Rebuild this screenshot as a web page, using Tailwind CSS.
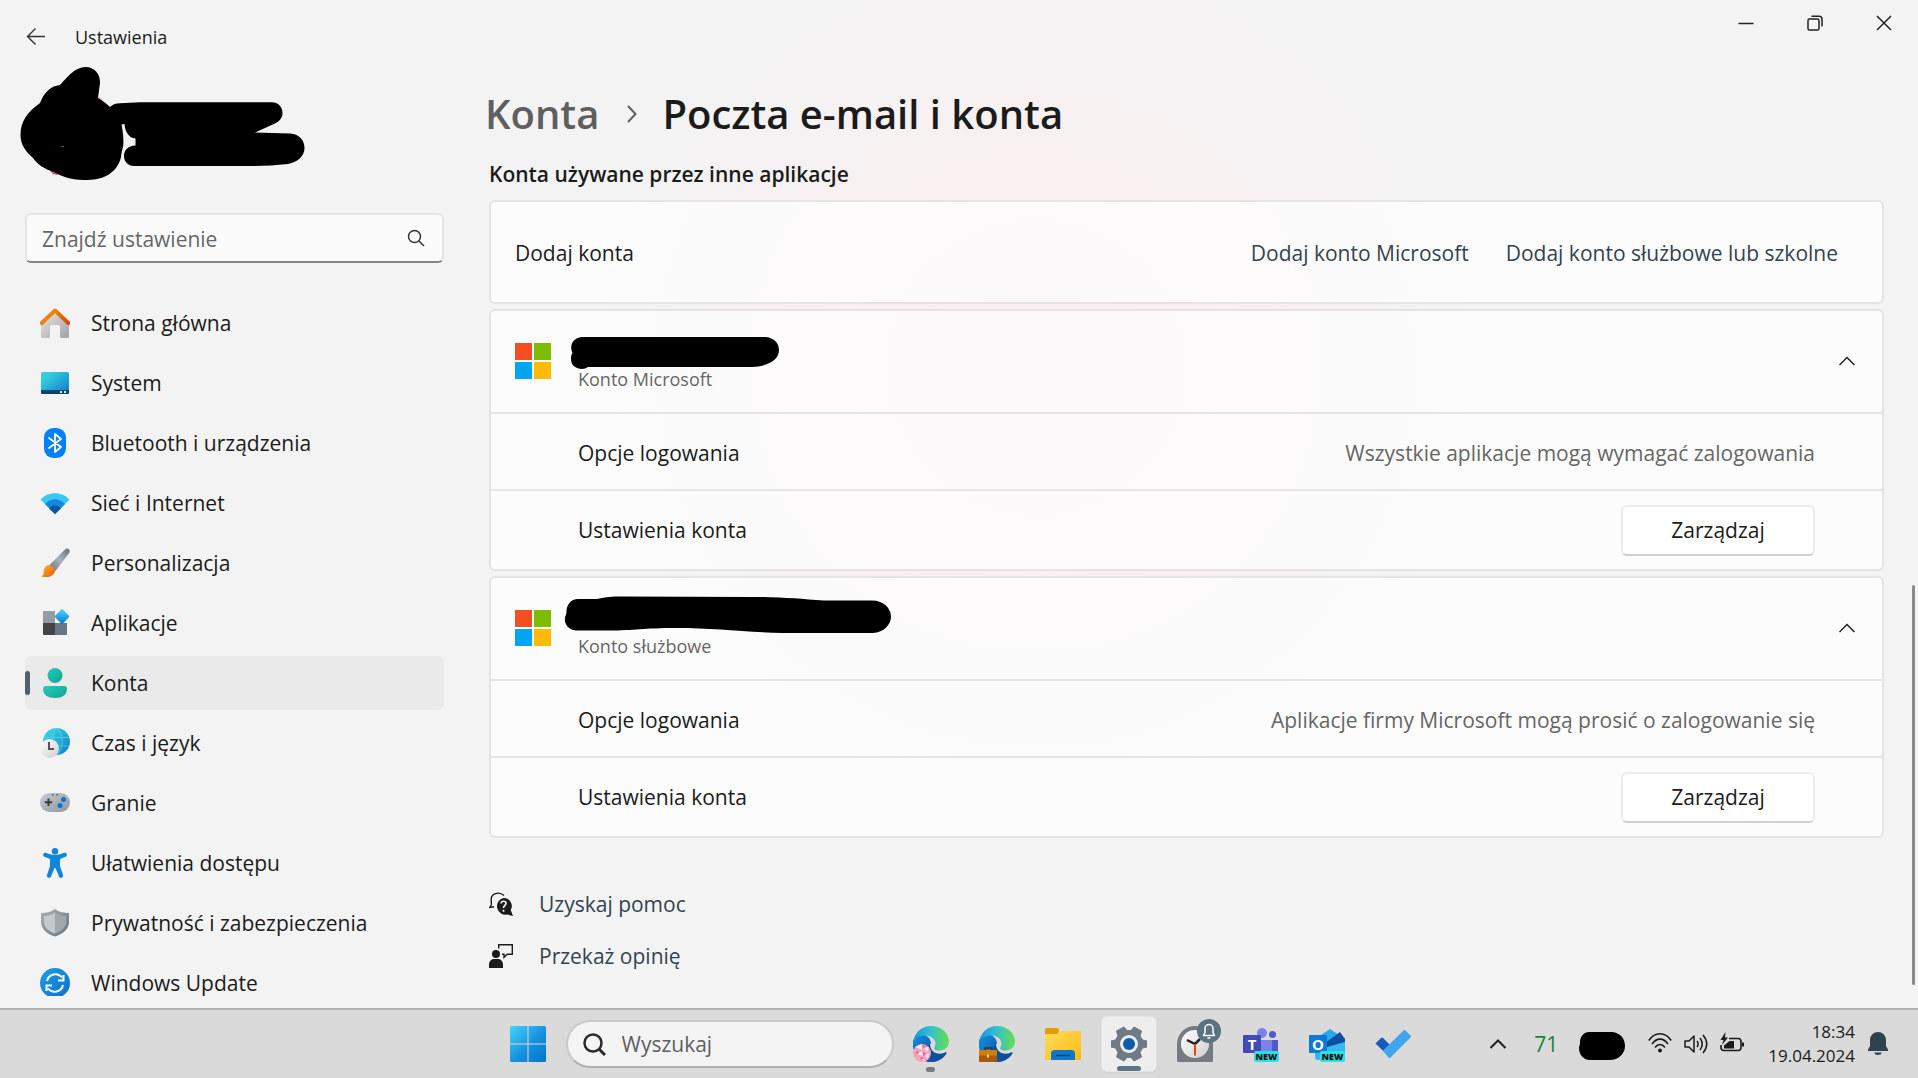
<!DOCTYPE html>
<html lang="pl">
<head>
  <meta charset="UTF-8">
  <meta name="viewport" content="width=device-width, initial-scale=1.0">
  <title>Ustawienia</title>
  <script src="https://cdn.jsdelivr.net/npm/@tailwindcss/browser@4"></script>
</head>
<body class="h-screen flex flex-col overflow-hidden bg-[#f3f3f3] bg-[radial-gradient(circle_at_54%_34%,#faedf0_0,#f8f0f1_200px,#f3f3f3_440px)] font-['Open_Sans','Noto_Sans',sans-serif] text-[21px] leading-[30px] text-[#1b1b1b]">

  <!-- Title bar -->
  <header class="flex h-[66px] shrink-0 items-start justify-between">
    <div class="flex h-full items-center gap-[29px] pt-2 pl-[26px]">
      <button type="button" aria-label="Wstecz">
        <svg class="h-5 w-5" viewBox="0 0 20 20" fill="none" stroke="#333" stroke-width="1.4"><path d="M19 9.500H1.500M9.500 1.500l-8 8 8 8"/></svg>
      </button>
      <span class="text-[18px] leading-6">Ustawienia</span>
    </div>
    <div class="flex h-[46px]">
      <button type="button" class="flex w-[69px] items-center justify-center" aria-label="Minimalizuj">
        <svg class="h-4 w-4" viewBox="0 0 16 16" fill="none" stroke="#222" stroke-width="1.500"><path d="M.5 8.500h15"/></svg>
      </button>
      <button type="button" class="flex w-[69px] items-center justify-center" aria-label="Przywróć">
        <svg class="h-4 w-4" viewBox="0 0 16 16" fill="none" stroke="#222" stroke-width="1.500"><rect x="1" y="4" width="11" height="11" rx="1.500"/><path d="M4.500 1.200H12a3 3 0 0 1 3 3V11.500"/></svg>
      </button>
      <button type="button" class="flex w-[69px] items-center justify-center" aria-label="Zamknij">
        <svg class="h-4 w-4" viewBox="0 0 16 16" fill="none" stroke="#222" stroke-width="1.500"><path d="M1 1l14 14M15 1L1 15"/></svg>
      </button>
    </div>
  </header>

  <div class="flex min-h-0 flex-1">
    <!-- Sidebar -->
    <aside class="flex w-[444px] shrink-0 flex-col pb-3 pl-[25px]">
      <svg class="-ml-[5px] h-[116px] w-[290px] shrink-0" viewBox="20 66 290 116">
        <path d="M97 97l3 .5 6 7-8-2z" fill="#f3a6bd"/>
        <path d="M50 171h6l2 4-5-1z" fill="#e0446f"/>
        <path d="M86 67C94 67 100.500 74 100 83L98 98C103 101 107 104 110 107C113 104 116 103.500 120 103.300L140 102.300H272C278 102.300 282.500 107 282.500 113C282.500 117.500 280 121 275 123.500L255 132.500L290 133.500C299 134 304.500 140 304.500 148C304.500 156 298 162 288 164C275 165.500 262 166 250 166H134C128 166 124 161.500 124 156C124 150 128 146 135.500 145.500V138.500C129 138 125 132 124.500 124L121.500 124.500C123 132 124 140 123 147C122 150 121.500 153 121 157C119 166 114 171 108 175C101 179 94 180 84 180C70 180 61 176 54 172C44 169 37 164 33 158C25 151 20.500 144 20.500 135C20.500 122 27 112 40 103C44 93 50 86 60 85C66 79 74 67 86 67z"/>
        <path d="M61 146h3v1h-3z" fill="#8a4a30"/>
      </svg>
      <div class="mt-[31px] flex h-[50px] shrink-0 items-center rounded-md border-2 border-[#e5e5e5] border-b-[#868686] bg-[#fbfbfb] pr-[17px] pl-[15px]">
        <label for="findSetting" class="sr-only">Znajdź ustawienie</label>
        <input id="findSetting" type="text" placeholder="Znajdź ustawienie" class="h-full min-w-0 flex-1 bg-transparent pt-0.5 outline-none placeholder:text-[#666]">
        <svg class="h-[18px] w-[18px]" viewBox="0 0 18 18" fill="none" stroke="#333" stroke-width="1.500"><circle cx="7.500" cy="7.500" r="6"/><path d="M12 12l5 5"/></svg>
      </div>

      <nav class="mt-[33px] flex min-h-0 flex-1 flex-col gap-1.5 overflow-hidden">
        <a href="#home" class="flex h-[54px] shrink-0 items-center gap-[21px] rounded-md pl-[15px]">
          <svg class="h-[30px] w-[30px]" viewBox="0 0 30 30">
            <defs>
              <linearGradient id="wall" x1="0" y1="0" x2="1" y2="1"><stop stop-color="#e8e8e8"/><stop offset="1" stop-color="#a3a3a3"/></linearGradient>
              <linearGradient id="roof"><stop stop-color="#f07f1a"/><stop offset=".5" stop-color="#e8860a"/><stop offset="1" stop-color="#d64a0b"/></linearGradient>
            </defs>
            <path fill="url(#wall)" d="M1 14L15 2l14 12v14.500a1.500 1.500 0 0 1-1.500 1.500H21.500a1.500 1.500 0 0 1-1.500-1.500V18.500a1.500 1.500 0 0 0-1.500-1.500h-7a1.500 1.500 0 0 0-1.500 1.500V28.500A1.500 1.500 0 0 1 8.500 30h-6A1.500 1.500 0 0 1 1 28.500z"/>
            <path d="M1.800 15L15 2.500 28.200 15" fill="none" stroke="url(#roof)" stroke-width="4" stroke-linejoin="round" stroke-linecap="round"/>
          </svg>
          Strona główna
        </a>
        <a href="#system" class="flex h-[54px] shrink-0 items-center gap-[21px] rounded-md pl-[15px]">
          <svg class="h-[30px] w-[30px]" viewBox="0 0 30 30">
            <defs><linearGradient id="screen" x1="0" y1="0" x2="1" y2="1"><stop offset=".2" stop-color="#35cde0"/><stop offset="1" stop-color="#0f78c8"/></linearGradient></defs>
            <rect x="1" y="4" width="28" height="22" rx="1.500" fill="url(#screen)"/>
            <path d="M1 22h28v2.500a1.500 1.500 0 0 1-1.500 1.500h-25A1.500 1.500 0 0 1 1 24.500z" fill="#0a4468"/>
            <path d="M20 23h2v2h-2zM24 23h2v2h-2z" fill="#d8eef6"/>
          </svg>
          System
        </a>
        <a href="#bluetooth" class="flex h-[54px] shrink-0 items-center gap-[21px] rounded-md pl-[15px]">
          <svg class="h-[30px] w-[30px]" viewBox="0 0 30 30">
            <rect x="4" y="0" width="22" height="30" rx="9.500" fill="#0080ff"/>
            <path d="M9 10l12 9-6 5V6l6 5-12 9" fill="none" stroke="#fff" stroke-width="1.800" stroke-linejoin="round" stroke-linecap="round"/>
          </svg>
          Bluetooth i urządzenia
        </a>
        <a href="#network" class="flex h-[54px] shrink-0 items-center gap-[21px] rounded-md pl-[15px]">
          <svg class="h-[30px] w-[30px]" viewBox="0 0 30 30">
            <path d="M.5 11.500C8 3 22 3 29.500 11.500L15 26z" fill="#3cc5f7"/>
            <path d="M5 16c6-6.500 14-6.500 20 0L15 26z" fill="#1389dd"/>
            <path d="M9 20.500c4-4.500 8-4.500 12 0L15 26z" fill="#0f569f"/>
          </svg>
          Sieć i Internet
        </a>
        <a href="#personalization" class="flex h-[54px] shrink-0 items-center gap-[21px] rounded-md pl-[15px]">
          <svg class="h-[30px] w-[30px]" viewBox="0 0 30 30">
            <defs>
              <linearGradient id="handle" x1="0" y1="1" x2="1" y2="0"><stop stop-color="#66727c"/><stop offset=".5" stop-color="#a9b2b9"/><stop offset="1" stop-color="#6b7176"/></linearGradient>
              <linearGradient id="bristle" x1="0" y1="0" x2="1" y2="1"><stop stop-color="#fbb92c"/><stop offset="1" stop-color="#e8590c"/></linearGradient>
            </defs>
            <path d="M9.500 17L25 1.500c2.500-2.500 6 .5 4.300 3.300L15.500 23z" fill="url(#handle)"/>
            <path d="M9.500 17c3 .5 5 3 5.500 6c-1 5.500-7 7-14 5.500c4-2 2-4 3-7.500c1-2.500 3-4 5.500-4z" fill="url(#bristle)"/>
          </svg>
          Personalizacja
        </a>
        <a href="#apps" class="flex h-[54px] shrink-0 items-center gap-[21px] rounded-md pl-[15px]">
          <svg class="h-[30px] w-[30px]" viewBox="0 0 30 30">
            <defs><linearGradient id="tile" x1="0" y1="0" x2="1" y2="1"><stop offset=".2" stop-color="#3ec8f5"/><stop offset="1" stop-color="#0672cf"/></linearGradient></defs>
            <path d="M3 4a1 1 0 0 1 1-1h11v12H3z" fill="#949ca4"/>
            <path d="M3 15h12v12H4a1 1 0 0 1-1-1z" fill="#424446"/>
            <path d="M15 15h12v11a1 1 0 0 1-1 1H15z" fill="#69757f"/>
            <rect x="16.500" y="3" width="11" height="11" rx="1.200" transform="rotate(45 22 8.500)" fill="url(#tile)"/>
          </svg>
          Aplikacje
        </a>
        <a href="#accounts" aria-current="page" class="flex h-[54px] shrink-0 items-center rounded-md bg-[#eaeaea]">
          <span class="h-6 w-[5px] rounded-full bg-[#4f5f6b]"></span>
          <svg class="mr-[21px] ml-[10px] h-[30px] w-[30px]" viewBox="0 0 30 30">
            <defs><linearGradient id="person" x1="0" y1="0" x2="1" y2="1"><stop stop-color="#24ccba"/><stop offset="1" stop-color="#12a493"/></linearGradient></defs>
            <circle cx="15" cy="7.500" r="7.500" fill="url(#person)"/>
            <path d="M6 18h18a3 3 0 0 1 3 3c0 6-5 9-12 9S3 27 3 21a3 3 0 0 1 3-3z" fill="url(#person)"/>
          </svg>
          Konta
        </a>
        <a href="#time" class="flex h-[54px] shrink-0 items-center gap-[21px] rounded-md pl-[15px]">
          <svg class="h-[30px] w-[30px]" viewBox="0 0 30 30">
            <defs><linearGradient id="dial" x1="0" y1="0" x2="1" y2="1"><stop stop-color="#fff"/><stop offset="1" stop-color="#cfcfcf"/></linearGradient></defs>
            <circle cx="16.500" cy="13.500" r="13.500" fill="url(#screen)"/>
            <path d="M16 0c-5 8-5 19 0 27M17 0c7 8 7 19 0 27M4 9.500h25M4 18h25" fill="none" stroke="#5fdcf0" stroke-width="1.200" opacity=".6"/>
            <circle cx="9.500" cy="20.500" r="9.500" fill="url(#dial)"/>
            <path d="M9 14v7h5" fill="none" stroke="#555" stroke-width="2"/>
          </svg>
          Czas i język
        </a>
        <a href="#gaming" class="flex h-[54px] shrink-0 items-center gap-[21px] rounded-md pl-[15px]">
          <svg class="h-[30px] w-[30px]" viewBox="0 0 30 30">
            <defs><linearGradient id="pad" x1="0" y1="0" x2="1" y2="1"><stop stop-color="#c6cbd0"/><stop offset="1" stop-color="#8f979e"/></linearGradient></defs>
            <rect y="5" width="30" height="19" rx="9.500" fill="url(#pad)"/>
            <path d="M8.500 10.500v7.500M4.800 14.200h7.400" stroke="#3b3b3b" stroke-width="2"/>
            <circle cx="23.500" cy="11.500" r="2.500" fill="#0a74d4"/><circle cx="20" cy="17.500" r="2.500" fill="#0a74d4"/>
            <path d="M12 6h1.500v1.500H12zM16.500 6H18v1.500h-1.500z" fill="#555"/>
          </svg>
          Granie
        </a>
        <a href="#accessibility" class="flex h-[54px] shrink-0 items-center gap-[21px] rounded-md pl-[15px]">
          <svg class="h-[30px] w-[30px]" viewBox="0 0 30 30" fill="#0f85dc">
            <circle cx="15" cy="3.200" r="3.200"/>
            <path d="M3.300 6.200c.5-1.500 1.800-1.800 3-1.300c6 2.600 11.400 2.600 17.400 0c1.200-.5 2.500-.2 3 1.100c.5 1.200 0 2.200-1.300 2.800L20 11v7l3 9c.9 3-3 4-4 1.500L15.500 20h-1L11 28.500c-1 2.500-4.900 1.500-4-1.500l3-9v-7L4.500 8.800C3.300 8.300 2.900 7.300 3.300 6.200z"/>
          </svg>
          Ułatwienia dostępu
        </a>
        <a href="#privacy" class="flex h-[54px] shrink-0 items-center gap-[21px] rounded-md pl-[15px]">
          <svg class="h-[30px] w-[30px]" viewBox="0 0 30 30">
            <defs><linearGradient id="rim" x1="0" y1="0" x2="1" y2="1"><stop stop-color="#a9b0b6"/><stop offset="1" stop-color="#6b747c"/></linearGradient></defs>
            <path d="M15 1c4 3 8.500 4 14 4v9c0 7-6 12-14 14.500C7 26 1 21 1 14V5c5.500 0 10-1 14-4z" fill="url(#rim)"/>
            <path d="M15 4.500C11.500 6.800 8 7.800 4 8v6c0 5 4.500 9.500 11 11.500z" fill="#c3c8cc"/>
            <path d="M15 4.500C18.500 6.800 22 7.800 26 8v6c0 5-4.500 9.500-11 11.500z" fill="#a0a7ad"/>
          </svg>
          Prywatność i zabezpieczenia
        </a>
        <a href="#update" class="flex h-[54px] shrink-0 items-center gap-[21px] rounded-md pl-[15px]">
          <svg class="h-[30px] w-[30px]" viewBox="0 0 30 30">
            <defs><linearGradient id="update" x1="0" y1="0" x2="1" y2="1"><stop stop-color="#1fa0e8"/><stop offset="1" stop-color="#0a6fd0"/></linearGradient></defs>
            <circle cx="15" cy="15" r="15" fill="url(#update)"/>
            <path d="M7 13a8.500 8.500 0 0 1 15-3.500M23.500 7v5.500H18M23 17a8.500 8.500 0 0 1-15 3.500M6.500 23v-5.500H12" fill="none" stroke="#fff" stroke-width="2"/>
          </svg>
          Windows Update
        </a>
      </nav>
    </aside>

    <!-- Page content -->
    <main class="min-w-0 flex-1 pt-6 pr-[34px] pl-[45px]">
      <h1 class="-ml-1 flex items-center text-[40px] leading-[48px] font-semibold">
        <a href="#accounts" class="text-[#5f5f5f]">Konta</a>
        <svg class="mr-6 ml-[27px] h-5 w-3" viewBox="0 0 12 20" fill="none" stroke="#5f5f5f" stroke-width="2"><path d="M2 2l7.500 8L2 18"/></svg>
        Poczta e-mail i konta
      </h1>
      <h2 class="mt-[22px] leading-7 font-semibold">Konta używane przez inne aplikacje</h2>

      <div class="mt-3 flex flex-col gap-[5px]">
        <section class="flex h-[104px] items-center gap-[37px] rounded-md border-2 border-black/6 bg-white/70 bg-clip-padding pt-0.5 pr-11 pl-6">
          <span class="flex-1">Dodaj konta</span>
          <a href="#add-microsoft" class="text-[#34434f]">Dodaj konto Microsoft</a>
          <a href="#add-work" class="text-[#34434f]">Dodaj konto służbowe lub szkolne</a>
        </section>

        <section class="rounded-md border-2 border-black/6 bg-white/70 bg-clip-padding">
          <div class="flex h-[101px] items-center pr-[27px] pb-px pl-6">
            <svg class="h-9 w-9" viewBox="0 0 36 36"><path fill="#f35022" d="M0 0h17v17H0z"/><path fill="#80bb03" d="M19 0h17v17H19z"/><path fill="#03a5f0" d="M0 19h17v17H0z"/><path fill="#ffba08" d="M19 19h17v17H19z"/></svg>
            <div class="ml-[27px] flex-1 pb-1">
              <svg class="-ml-[14px] h-10 w-[330px]" viewBox="564 330 330 40"><path d="M581 338h185c8 1 13 6 13 13c0 9-9 16-27 17h-164c-5 4-17 2-17-8c0-4 1-5 1.500-6c-3-6-1-14 8.500-16z"/></svg>
              <p class="text-[18px] leading-5 text-[#666]">Konto Microsoft</p>
            </div>
            <button type="button" aria-label="Zwiń" aria-expanded="true">
              <svg class="h-4 w-4" viewBox="0 0 16 16" fill="none" stroke="#222" stroke-width="1.500"><path d="M.5 12L8 4.500l7.500 7.500"/></svg>
            </button>
          </div>
          <div class="flex h-[77px] items-center justify-between border-t-2 border-black/9 pt-0.5 pr-[67px] pl-[87px]">
            <span>Opcje logowania</span>
            <span class="text-[#666]">Wszystkie aplikacje mogą wymagać zalogowania</span>
          </div>
          <div class="flex h-20 items-center justify-between border-t-2 border-black/9 pr-[67px] pl-[87px]">
            <span>Ustawienia konta</span>
            <button type="button" class="h-[51px] w-[194px] rounded-md border-2 border-[#ececec] border-b-[#d0d0d0] bg-white">Zarządzaj</button>
          </div>
        </section>

        <section class="rounded-md border-2 border-black/6 bg-white/70 bg-clip-padding">
          <div class="flex h-[101px] items-center pr-[27px] pb-px pl-6">
            <svg class="h-9 w-9" viewBox="0 0 36 36"><path fill="#f35022" d="M0 0h17v17H0z"/><path fill="#80bb03" d="M19 0h17v17H19z"/><path fill="#03a5f0" d="M0 19h17v17H0z"/><path fill="#ffba08" d="M19 19h17v17H19z"/></svg>
            <div class="ml-[27px] flex-1 pb-1">
              <svg class="-ml-[14px] h-10 w-[330px]" viewBox="564 597 330 40"><path d="M577 600h20c10-2 15-2.500 25-2.500l130 .5c30 0 48 2 72 3.500h48c12 0 19 8 19 16s-7 16-18 16.500h-90c-38-1-70-5-106-5c-36 0-40 2.500-70 2.500h-31c-8-.5-12-7-11-13c1-3 1.500-4 1.500-6c0-6 4-12 10.500-12.500z"/></svg>
              <p class="text-[18px] leading-5 text-[#666]">Konto służbowe</p>
            </div>
            <button type="button" aria-label="Zwiń" aria-expanded="true">
              <svg class="h-4 w-4" viewBox="0 0 16 16" fill="none" stroke="#222" stroke-width="1.500"><path d="M.5 12L8 4.500l7.500 7.500"/></svg>
            </button>
          </div>
          <div class="flex h-[77px] items-center justify-between border-t-2 border-black/9 pt-0.5 pr-[67px] pl-[87px]">
            <span>Opcje logowania</span>
            <span class="text-[#666]">Aplikacje firmy Microsoft mogą prosić o zalogowanie się</span>
          </div>
          <div class="flex h-20 items-center justify-between border-t-2 border-black/9 pr-[67px] pl-[87px]">
            <span>Ustawienia konta</span>
            <button type="button" class="h-[51px] w-[194px] rounded-md border-2 border-[#ececec] border-b-[#d0d0d0] bg-white">Zarządzaj</button>
          </div>
        </section>
      </div>

      <div class="mt-[51px] flex flex-col items-start gap-[22px] text-[#34434f]">
        <a href="#help" class="flex items-center gap-[26px]">
          <svg class="h-6 w-6" viewBox="0 0 24 24">
            <path d="M15 3.500C10-1 1.500 1.500 2.200 8.500c.2 2 .3 3 0 4.500L.8 15.500l4.200-.7" fill="none" stroke="#1b1b1b" stroke-width="1.400"/>
            <path d="M14.500 6a8 8 0 0 1 7.200 12l2.300 6-5.500-1.500A8.300 8.300 0 1 1 14.500 6z" fill="#1b1b1b"/>
            <path d="M12 11.500c.3-3 5-3 5 0c0 2-2.500 2-2.500 4.500M14.500 17.800v2" fill="none" stroke="#f3f3f3" stroke-width="1.700"/>
          </svg>
          Uzyskaj pomoc
        </a>
        <a href="#feedback" class="flex items-center gap-[26px]">
          <svg class="h-6 w-6" viewBox="0 0 24 24">
            <circle cx="7" cy="10" r="4" fill="#1b1b1b"/>
            <path d="M0 24v-3c0-3.500 2-6 5-6h4c3 0 5 2.500 5 6v3z" fill="#1b1b1b"/>
            <path d="M9.700 4.500V.7h13.600v9.600h-5l-3.300 3v-3h-2" fill="none" stroke="#1b1b1b" stroke-width="1.400"/>
          </svg>
          Przekaż opinię
        </a>
      </div>
    </main>
    <!-- Scroll thumb -->
    <div class="fixed top-[585px] right-[3px] h-[400px] w-[3px] rounded-full bg-[#8a8a8a]"></div>
  </div>

  <!-- Taskbar -->
  <footer class="grid h-[70px] shrink-0 grid-cols-[1fr_auto_1fr] border-t-2 border-[#b0b0b0] bg-[#dadada]">
    <div></div>
    <div class="flex items-center pl-0.5">
      <button type="button" class="flex h-14 w-[66px] items-center justify-center" aria-label="Start">
        <svg class="h-9 w-9" viewBox="0 0 36 36">
          <defs><linearGradient id="start" x1="0" y1="0" x2="36" y2="36" gradientUnits="userSpaceOnUse"><stop stop-color="#45d3fb"/><stop offset=".55" stop-color="#1591df"/><stop offset="1" stop-color="#0672cd"/></linearGradient></defs>
          <path fill="url(#start)" d="M1.500 0h16v17.500H0V1.500A1.500 1.500 0 0 1 1.500 0zM18.500 0h16A1.500 1.500 0 0 1 36 1.500v16H18.500zM0 18.500h17.500V36h-16A1.500 1.500 0 0 1 0 34.500zM18.500 18.500H36v16a1.500 1.500 0 0 1-1.500 1.500h-16z"/>
        </svg>
      </button>
      <label class="mr-1 ml-[5px] flex h-12 w-[328px] items-center gap-4 rounded-full border-2 border-[#c9c9c9] border-b-[#b0b0b0] bg-[#f4f4f4] pl-[15px]">
        <svg class="h-[23px] w-[23px] shrink-0" viewBox="0 0 23 23" fill="none" stroke="#2b2b2b" stroke-width="2.500"><circle cx="10" cy="10" r="8.500"/><path d="M16 16l6 6" stroke-width="3"/></svg>
        <span class="sr-only">Wyszukaj</span>
        <input type="text" placeholder="Wyszukaj" class="h-full w-[250px] bg-transparent outline-none placeholder:text-[#606060]">
      </label>
      <button type="button" class="relative flex h-14 w-[66px] items-center justify-center" aria-label="Microsoft Edge">
        <svg class="h-9 w-9" viewBox="0 0 36 36">
          <defs>
            <linearGradient id="edgeTop"><stop stop-color="#1590dd"/><stop offset=".45" stop-color="#33bcd6"/><stop offset="1" stop-color="#65df4c"/></linearGradient>
            <linearGradient id="edgeMid" x1="0" y1="0" x2="1" y2="1"><stop stop-color="#178fe0"/><stop offset="1" stop-color="#0b4d9c"/></linearGradient>
          </defs>
          <g id="edge">
            <path d="M0 18c0 11 8 18 18 18c7 0 12-3 15.500-8.500c.5-1-.5-1.500-1.500-1c-8 3.500-15-1-15-8.500c0-5-4-9.500-9-9.500c-4.500 0-8 4-8 9.500z" fill="#0c509c"/>
            <path d="M0 18c0-6 4-9.500 8.500-9.500c5.500 0 9.500 4.500 9.500 9c-4 2-5 8-1.500 12c2 3 4 5 6 6c-12 2-22.500-6-22.500-17.500z" fill="url(#edgeMid)"/>
            <path d="M0 17C1 7 8.500 0 18 0c10 0 18 7 18 15.500c0 6-5 9-9.500 9c-4 0-6.500-1.500-5-3.500c3-4-.5-11.500-9.500-11.500c-6 0-10.500 3-12 7.500z" fill="url(#edgeTop)"/>
          </g>
          <circle cx="9" cy="27" r="9" fill="#f3a3bb"/>
          <path d="M2 21l7-3 0 6zM11 22l5-1-2 5zM4 28l5-3 1 5zM12 29l4-2-1 6zM6 33l4-1 2 3z" fill="#fbe8ee"/>
          <path d="M3 25l3 1-2 3zM9 19l2 3 2-2zM10 26l3 2-3 2zM8 31l3 2-4 1z" fill="#dd6289"/>
        </svg>
        <span class="absolute bottom-0 h-[5px] w-[9px] rounded-full bg-[#7a7a7a]"></span>
      </button>
      <button type="button" class="flex h-14 w-[66px] items-center justify-center" aria-label="Microsoft Edge, profil służbowy">
        <svg class="h-9 w-9" viewBox="0 0 36 36">
          <use href="#edge"/>
          <path d="M6 24v-2h7v2" fill="none" stroke="#333" stroke-width="1.500"/>
          <rect y="24" width="18" height="12" rx="1" fill="#a85a06"/>
          <path d="M0 24h18v5.500H0z" fill="#d07d10"/><path d="M8 28.500h2v3H8z" fill="#ffd34a"/>
        </svg>
      </button>
      <button type="button" class="flex h-14 w-[66px] items-center justify-center" aria-label="Eksplorator plików">
        <svg class="h-9 w-9" viewBox="0 0 36 36">
          <defs><linearGradient id="folder" x1="0" y1="0" x2="1" y2="1"><stop stop-color="#ffdc60"/><stop offset="1" stop-color="#fdb90d"/></linearGradient></defs>
          <path d="M0 3.500A1.500 1.500 0 0 1 1.500 2H12a2 2 0 0 1 2 2v4H0z" fill="#e39c05"/>
          <path d="M0 8h12l3-3h20a1 1 0 0 1 1 1v27a1 1 0 0 1-1 1H1a1 1 0 0 1-1-1z" fill="url(#folder)"/>
          <path d="M6 34V27.500A3.500 3.500 0 0 1 9.500 24h17a3.500 3.500 0 0 1 3.500 3.500V34z" fill="#0f76ca"/>
          <path d="M11 29.500h14" stroke="#0a4488" stroke-width="1.500"/>
        </svg>
      </button>
      <button type="button" class="flex h-14 w-[66px] items-center justify-center" aria-label="Ustawienia">
        <span class="relative flex h-14 w-14 items-center justify-center rounded-md border border-[#e4e4e4] bg-[#eeeeee] shadow-xs">
          <svg class="h-9 w-9" viewBox="0 0 36 36">
            <path d="M13 1l3 3.500h4L23 1l7.500 4-1.500 5 2.500 4L36 15v6l-4.500 1-2.500 4.500 1.500 4.500L23 35l-3-3.500h-4L13 35l-7.500-4L7 26.500 4.500 22 0 21v-6l4.500-1L7 10 5.500 5z" fill="#6f7a84" stroke="#6f7a84" stroke-linejoin="round"/>
            <circle cx="18" cy="18" r="9" fill="#e9eef2"/><circle cx="18" cy="18" r="6" fill="#0d5cab"/>
          </svg>
          <span class="absolute bottom-0 h-[5px] w-6 rounded-full bg-[#5f7584]"></span>
        </span>
      </button>
      <button type="button" class="relative flex h-14 w-[66px] items-center justify-center" aria-label="Zegar">
        <svg class="h-9 w-9" viewBox="0 0 36 36">
          <path d="M0 18a18 18 0 0 1 36 0v17a1 1 0 0 1-1 1H1a1 1 0 0 1-1-1z" fill="#757b81"/>
          <circle cx="18" cy="18" r="14" fill="url(#dial)"/>
          <path d="M10 14l8 4 5-5" fill="none" stroke="#222" stroke-width="2.500"/><path d="M18 18v11.500" stroke="#d9480f" stroke-width="2"/>
        </svg>
        <span class="absolute top-[3px] right-[7px] flex h-6 w-6 items-center justify-center rounded-full bg-[#5b7282]">
          <svg class="h-4 w-4" viewBox="0 0 16 16" fill="none" stroke="#fff" stroke-width="1.500"><path d="M2.500 12.500h11L12 9.500V5.500a4 4 0 0 0-8 0v4zM6.500 15h3" stroke-linejoin="round"/></svg>
        </span>
      </button>
      <button type="button" class="flex h-14 w-[66px] items-center justify-center" aria-label="Teams">
        <svg class="h-9 w-9" viewBox="0 0 36 36">
          <circle cx="19" cy="7" r="5" fill="#7b83eb"/><circle cx="29.500" cy="8.500" r="3.500" fill="#5059c9"/>
          <path d="M27 14h8v12a6 6 0 0 1-8 5z" fill="#5059c9"/><path d="M13 14h16v12a8 8 0 0 1-16 4z" fill="#7b83eb"/>
          <rect y="9" width="18" height="18" rx="1" fill="#4349b8"/>
          <text x="9" y="23.500" text-anchor="middle" font-size="15" font-weight="700" fill="#fff">T</text>
          <rect x="11" y="25" width="25" height="11" rx="2" fill="#29e0e3"/>
          <text x="23.500" y="34" text-anchor="middle" font-size="9" font-weight="800" fill="#111">NEW</text>
        </svg>
      </button>
      <button type="button" class="flex h-14 w-[66px] items-center justify-center" aria-label="Outlook">
        <svg class="h-9 w-9" viewBox="0 0 36 36">
          <path d="M6 13L21 3l15 10v18H6z" fill="#28a8ea"/><path d="M16 17L31 6l5 7v3L18 27z" fill="#0f4f9f"/><path d="M6 25l12-4 18-5v16a2 2 0 0 1-2 2H9a3 3 0 0 1-3-3z" fill="#35b8f1"/>
          <rect y="9" width="18" height="18" rx="1" fill="#0f78d4"/>
          <text x="9" y="23.500" text-anchor="middle" font-size="15" font-weight="700" fill="#fff">O</text>
          <rect x="11" y="25" width="25" height="11" rx="2" fill="#29e0e3"/>
          <text x="23.500" y="34" text-anchor="middle" font-size="9" font-weight="800" fill="#111">NEW</text>
        </svg>
      </button>
      <button type="button" class="flex h-14 w-[66px] items-center justify-center" aria-label="To Do">
        <svg class="h-9 w-9" viewBox="0 0 36 36">
          <path d="M.5 17.500L6 12q1-1 2 0l12.500 12.500L14.500 31z" fill="#185abd"/>
          <path d="M8 24.500L28.500 4.500q1-1 2 0l5 5q1 1 0 2L15.500 31.500q-1 1-2 0z" fill="#41a5ee"/>
        </svg>
      </button>
    </div>

    <div class="flex items-center justify-end pr-[30px]">
      <button type="button" class="mr-7" aria-label="Pokaż ukryte ikony">
        <svg class="h-4 w-4" viewBox="0 0 16 16" fill="none" stroke="#222" stroke-width="2"><path d="M.5 12L8 4.500l7.500 7.500"/></svg>
      </button>
      <span class="mr-5 text-[#14863a]">71</span>
      <svg class="mr-[22px] h-8 w-12" viewBox="0 0 48 32"><path d="M11 4h23c9 1 13 7 13 14c0 8-7 14-15 14H12C5 32 1 26 1 20c0-2 1-3 1-5c0-7 4-11 9-11z"/></svg>
      <svg class="mr-3 h-6 w-6" viewBox="0 0 24 24" fill="none" stroke="#1b1b1b" stroke-width="1.600"><path d="M.8 8.500C7-.5 17-.5 23.200 8.500M4 12c4.500-6.500 11.500-6.500 16 0M7 15.500c3-4 7-4 10 0"/><circle cx="12" cy="18.500" r="2" fill="#1b1b1b" stroke="none"/></svg>
      <svg class="mr-3 h-6 w-6" viewBox="0 0 24 24" fill="none" stroke="#1b1b1b" stroke-width="1.500"><path d="M1 9h4l5-5v16l-5-5H1zM13 9c1.500 2 1.500 4 0 6M16 6c3 4 3 8 0 12M19 3c5 6 5 12 0 18" stroke-linejoin="round"/></svg>
      <svg class="mr-6 h-6 w-6" viewBox="0 0 24 24" fill="none" stroke="#1b1b1b" stroke-width="1.600"><path d="M9 6.500h9a3 3 0 0 1 3 3v6a3 3 0 0 1-3 3H4a3 3 0 0 1-3-3V13"/><path d="M22 10.500h2v4h-2zM4 13.500L9.500 9H14v7.500H4z" fill="#1b1b1b" stroke="none"/><path d="M5.500 0L.5 8h3L2 13l6-7.500H5z" fill="#1b1b1b" stroke="none"/></svg>
      <div class="mr-[13px] text-right text-[17px] leading-6">
        <time class="block">18:34</time>
        <time class="block">19.04.2024</time>
      </div>
      <svg class="h-6 w-5" viewBox="0 0 20 24" fill="#2f4250"><path d="M10 0a8 8 0 0 1 8 8v6l2 3.500V19H0v-1.500L2 14V8a8 8 0 0 1 8-8zM6.500 20.500h7a3.500 2.500 0 0 1-7 0z"/></svg>
    </div>
  </footer>
</body>
</html>
